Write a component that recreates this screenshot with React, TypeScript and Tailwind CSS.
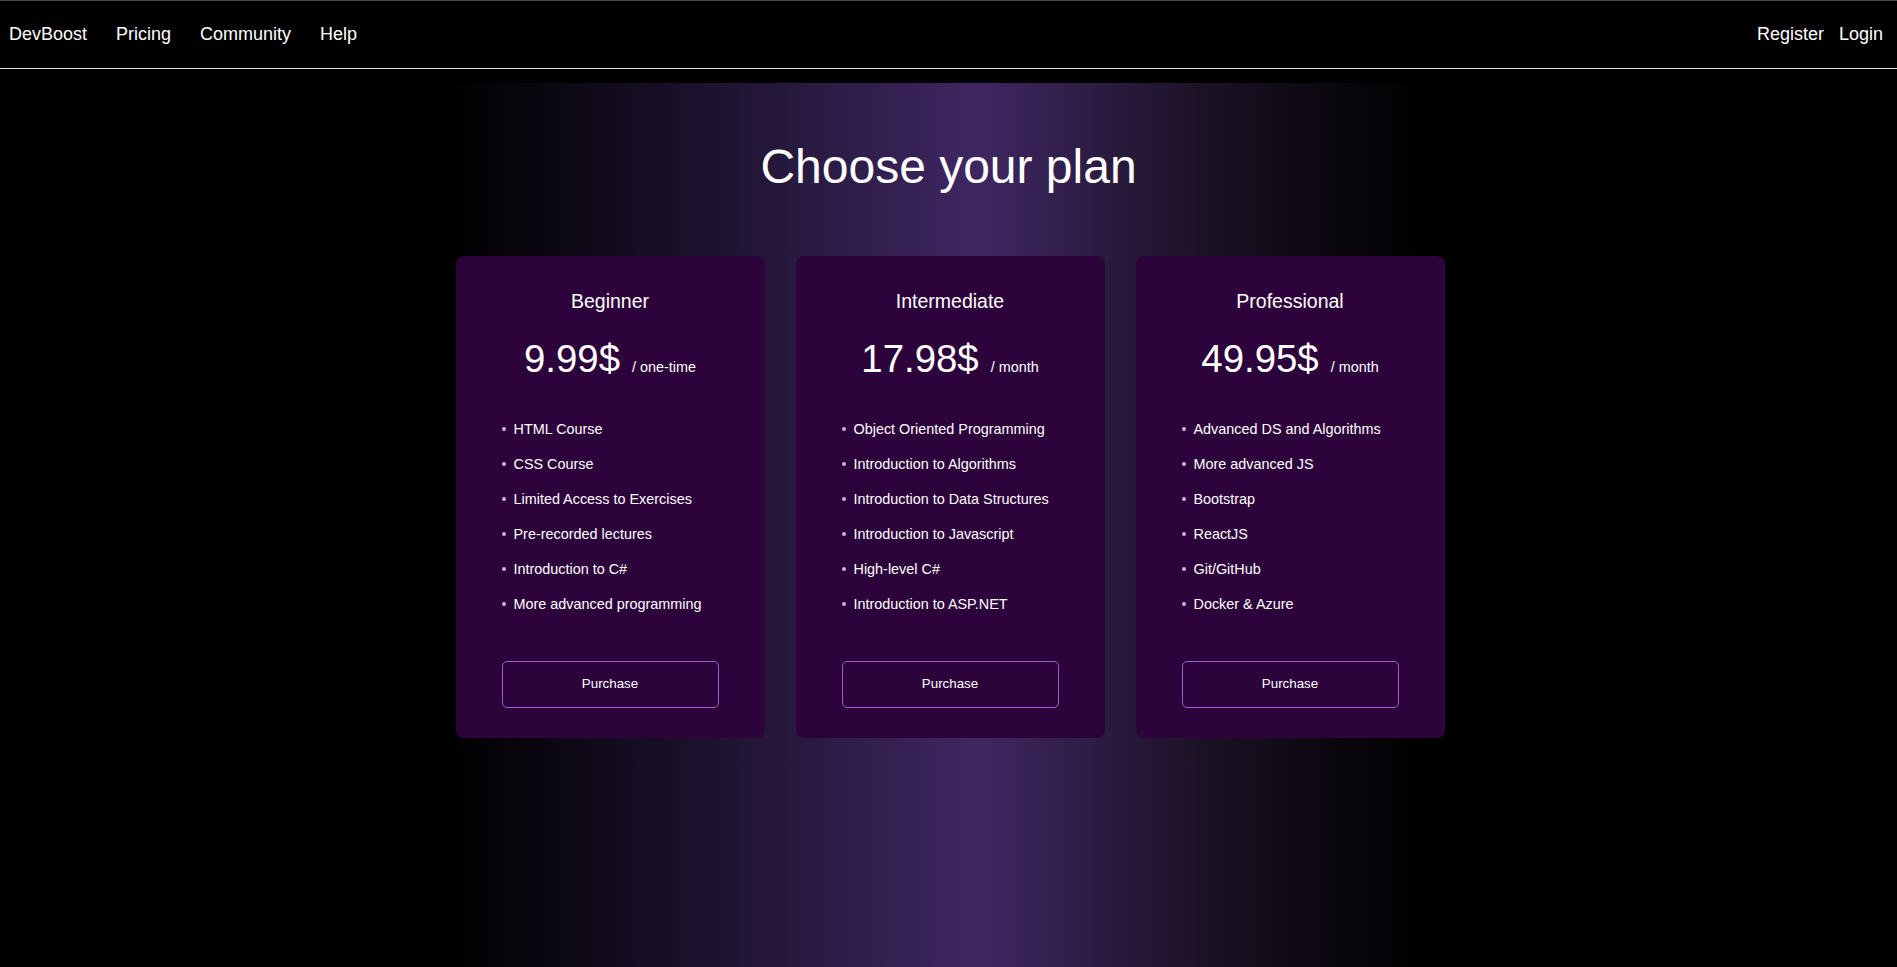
import React from 'react'

type Plan = {
  name: string
  price: string
  period: string
  features: string[]
}

const plans: Plan[] = [
  {
    name: 'Beginner',
    price: '9.99$',
    period: '/ one-time',
    features: [
      'HTML Course',
      'CSS Course',
      'Limited Access to Exercises',
      'Pre-recorded lectures',
      'Introduction to C#',
      'More advanced programming',
    ],
  },
  {
    name: 'Intermediate',
    price: '17.98$',
    period: '/ month',
    features: [
      'Object Oriented Programming',
      'Introduction to Algorithms',
      'Introduction to Data Structures',
      'Introduction to Javascript',
      'High-level C#',
      'Introduction to ASP.NET',
    ],
  },
  {
    name: 'Professional',
    price: '49.95$',
    period: '/ month',
    features: [
      'Advanced DS and Algorithms',
      'More advanced JS',
      'Bootstrap',
      'ReactJS',
      'Git/GitHub',
      'Docker & Azure',
    ],
  },
]

function Navbar() {
  return (
    <nav className="box-border h-[69px] flex items-center justify-between border-t border-b border-t-[#4a4a4a] border-b-[#dcdcdc] text-[18px] text-white">
      <div className="flex items-center gap-[29px] pl-[9px]">
        <a href="#">DevBoost</a>
        <a href="#">Pricing</a>
        <a href="#">Community</a>
        <a href="#">Help</a>
      </div>
      <div className="flex items-center gap-[15px] pr-[14px]">
        <a href="#">Register</a>
        <a href="#">Login</a>
      </div>
    </nav>
  )
}

function PlanCard({ plan }: { plan: Plan }) {
  return (
    <div className="w-[309px] h-[482px] rounded-lg bg-[#2d033b] px-[46px] pt-[34px] flex flex-col text-white">
      <h2 className="text-center text-[19.5px] leading-[1.15]">{plan.name}</h2>
      <div className="mt-[24px] flex items-baseline justify-center leading-[1.15]">
        <span className="text-[38.4px]">{plan.price}</span>
        <span className="ml-3 text-[14.4px]">{plan.period}</span>
      </div>
      <ul className="mt-[31px] text-[14.4px]">
        {plan.features.map((f) => (
          <li key={f} className="flex items-center leading-[35px]">
            <span className="w-1 h-1 rounded-full bg-[#d7a9ec]"></span>
            <span className="ml-2">{f}</span>
          </li>
        ))}
      </ul>
      <button className="mt-[39px] h-[47px] w-full rounded-[5px] border border-[#a35cc7] text-[13.33px] text-white">
        Purchase
      </button>
    </div>
  )
}

export default function App() {
  return (
    <div className="h-screen overflow-hidden bg-black font-['Liberation_Sans',Arial,sans-serif]">
      <Navbar />
      <main className="mx-auto mt-[14px] w-[1000px] h-[884px] bg-[linear-gradient(90deg,#000_0%,#1e1330_27%,#3f2762_53%,#1c1226_75%,#000_97%)] pt-[56px]">
        <h1 className="text-center text-[48px] leading-[1.15] text-white">Choose your plan</h1>
        <div className="mt-[62px] flex justify-center gap-[31px] pl-[3px]">
          {plans.map((p) => (
            <PlanCard key={p.name} plan={p} />
          ))}
        </div>
      </main>
    </div>
  )
}
